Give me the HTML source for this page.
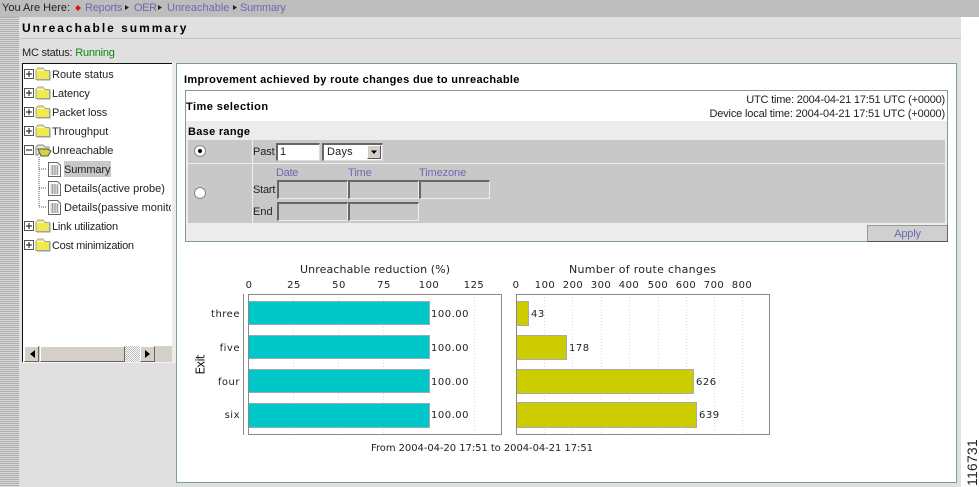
<!DOCTYPE html>
<html><head><meta charset="utf-8"><style>
html,body{margin:0;padding:0;width:979px;height:487px;overflow:hidden;background:#fff}
body{position:relative;font:11px/13px "Liberation Sans",sans-serif;color:#222}
div{position:absolute;box-sizing:border-box}
.t{white-space:nowrap;height:13px;margin-top:1px}
.b{font-weight:bold;color:#000}
.l{color:#6a6ab0}
.in{background:#c8c8c8;border-top:2px solid #666;border-left:2px solid #666;border-right:1px solid #eee;border-bottom:1px solid #eee}
svg{position:absolute;left:0;top:0}
</style></head><body>
<div style="left:0;top:0;width:961px;height:487px;background:#e0e0e0"></div>
<div style="left:0;top:0;width:979px;height:17px;background:#bdbdbd"></div>
<div style="left:0;top:17px;width:19px;height:470px;background:repeating-linear-gradient(180deg,#aeaeae 0,#aeaeae 1px,#d8d8d8 1px,#d8d8d8 2px)"></div>
<div style="left:19px;top:38px;width:942px;height:1px;background:#c4c4c4"></div>
<div style="left:22px;top:63px;width:150px;height:299px;background:#fff;border-left:1px solid #111;border-top:1px solid #111;overflow:hidden"></div>
<div style="left:23px;top:362px;width:149px;height:1px;background:#f4f4f4"></div>
<div style="left:172px;top:63px;width:4px;height:300px;background:#ececec"></div>
<div style="left:176px;top:63px;width:781px;height:420px;background:#fff;border:1px solid #7f9c9c"></div>
<div style="left:185px;top:90px;width:763px;height:152px;background:#fff;border:1px solid #7f9c9c"></div>
<div style="left:186px;top:121px;width:761px;height:120px;background:#ececec"></div>
<div style="left:188px;top:140px;width:757px;height:23px;background:#c8c8c8"></div>
<div style="left:188px;top:164px;width:757px;height:59px;background:#c8c8c8"></div>
<div style="left:252px;top:140px;width:1px;height:83px;background:#eee"></div>

<div class="t" style="left:2px;top:1px">You Are Here:</div>
<div class="t l" style="left:85px;top:1px;letter-spacing:-.2px">Reports</div>
<div class="t l" style="left:134px;top:1px;letter-spacing:-.4px">OER</div>
<div class="t l" style="left:167px;top:1px">Unreachable</div>
<div class="t l" style="left:240px;top:1px;letter-spacing:-.2px">Summary</div>
<div class="t b" style="left:22px;top:21px;font-size:12px;letter-spacing:1.98px">Unreachable summary</div>
<div class="t" style="left:22px;top:46px;letter-spacing:-.22px">MC status: <span style="color:#0a8a0a">Running</span></div>

<div class="t" style="left:52px;top:68px">Route status</div>
<div class="t" style="left:52px;top:87px;letter-spacing:-.1px">Latency</div>
<div class="t" style="left:52px;top:106px;letter-spacing:-.1px">Packet loss</div>
<div class="t" style="left:52px;top:125px">Throughput</div>
<div class="t" style="left:52px;top:144px;letter-spacing:-.1px">Unreachable</div>
<div style="left:64px;top:161px;width:47px;height:16px;background:#c8c8c8"></div>
<div class="t" style="left:64px;top:163px;letter-spacing:-.1px">Summary</div>
<div class="t" style="left:64px;top:182px">Details(active probe)</div>
<div class="t" style="left:64px;top:201px;width:107px;overflow:hidden">Details(passive monitor)</div>
<div class="t" style="left:52px;top:220px;letter-spacing:-.2px">Link utilization</div>
<div class="t" style="left:52px;top:239px;letter-spacing:-.3px">Cost minimization</div>

<div class="t b" style="left:184px;top:73px;letter-spacing:.33px">Improvement achieved by route changes due to unreachable</div>
<div class="t b" style="left:186px;top:100px;letter-spacing:.45px">Time selection</div>
<div class="t b" style="left:188px;top:125px;letter-spacing:.3px">Base range</div>
<div class="t" style="right:34px;top:93px;letter-spacing:-.2px">UTC time: 2004-04-21 17:51 UTC (+0000)</div>
<div class="t" style="right:34px;top:107px;letter-spacing:-.16px">Device local time: 2004-04-21 17:51 UTC (+0000)</div>

<div class="t" style="left:253px;top:145px;letter-spacing:-.1px">Past</div>
<div style="left:276px;top:143px;width:44px;height:18px;background:#fff;border-top:2px solid #666;border-left:2px solid #666;border-right:1px solid #ddd;border-bottom:1px solid #ddd;padding-left:2px;line-height:15px">1</div>
<div style="left:322px;top:143px;width:61px;height:18px;background:#fff;border-top:2px solid #666;border-left:2px solid #666;border-right:1px solid #ddd;border-bottom:1px solid #ddd;padding-left:3px;line-height:15px;letter-spacing:.2px">Days</div>
<div style="left:367px;top:145px;width:14px;height:14px;background:#d4d0c8;border:1px solid;border-color:#fff #555 #555 #fff"></div>
<div class="t l" style="left:276px;top:166px;letter-spacing:-.3px">Date</div>
<div class="t l" style="left:348px;top:166px;letter-spacing:-.1px">Time</div>
<div class="t l" style="left:419px;top:166px;letter-spacing:-.1px">Timezone</div>
<div class="t" style="left:253px;top:183px;letter-spacing:-.2px">Start</div>
<div class="t" style="left:253px;top:205px">End</div>
<div class="in" style="left:277px;top:180px;width:71px;height:19px"></div>
<div class="in" style="left:348px;top:180px;width:71px;height:19px"></div>
<div class="in" style="left:419px;top:180px;width:71px;height:19px"></div>
<div class="in" style="left:277px;top:202px;width:71px;height:19px"></div>
<div class="in" style="left:348px;top:202px;width:71px;height:19px"></div>
<div class="l" style="left:867px;top:225px;width:81px;height:17px;background:#d0d0d0;border:1px solid;border-color:#999 #666 #555 #999;text-align:center;line-height:16px;letter-spacing:-.2px">Apply</div>

<div style="left:24px;top:346px;width:148px;height:16px;background:#d4d0c8"></div>
<div style="left:125px;top:346px;width:15px;height:16px;background:repeating-conic-gradient(#bbb 0 25%,#fff 0 50%) 0 0/2px 2px"></div>
<div style="left:24px;top:346px;width:15px;height:16px;background:#d4d0c8;border:1px solid;border-color:#fff #666 #666 #fff"></div>
<div style="left:40px;top:346px;width:85px;height:16px;background:#d4d0c8;border:1px solid;border-color:#fff #666 #666 #fff"></div>
<div style="left:140px;top:346px;width:15px;height:16px;background:#d4d0c8;border:1px solid;border-color:#fff #666 #666 #fff"></div>

<div class="t" style="left:965px;top:486px;margin:0;font-size:14px;line-height:14px;height:14px;transform-origin:0 0;transform:rotate(-90deg);letter-spacing:.2px;color:#222">116731</div>

<svg width="979" height="487" viewBox="0 0 979 487" xmlns="http://www.w3.org/2000/svg">
<defs>
<g id="plus"><rect x="0.5" y="0.5" width="9" height="9" fill="#fff" stroke="#555"/><path d="M2 5h6M5 2v6" stroke="#111" shape-rendering="crispEdges"/></g>
<g id="folder"><path d="M1 3.500 3 1h5l2 2.500h4.500v9H1z" fill="#eeea50" stroke="#a8a890"/><path d="M2 3.500h7" stroke="#fff"/><path d="M15 4v9H2" fill="none" stroke="#999"/></g>
<g id="doc"><path d="M.5.500h9l3 3v11H.5z" fill="#fff" stroke="#666"/><path d="M2.500 4h8M2.500 6h8M2.500 8h8M2.500 10h8M2.500 12h8M4.500 3v10M7 3v10M9.500 4v9" stroke="#8a8a8a" stroke-width=".7" fill="none"/></g>
</defs>
<path d="M78 5l3 3-3 3-3-3z" fill="#d81818"/>
<path d="M125 5l4 2.500-4 2.500zM158 5l4 2.500-4 2.500zM233 5l4 2.500-4 2.500z" fill="#222"/>

<use href="#plus" x="24" y="69"/><use href="#folder" x="35" y="67"/>
<use href="#plus" x="24" y="88"/><use href="#folder" x="35" y="86"/>
<use href="#plus" x="24" y="107"/><use href="#folder" x="35" y="105"/>
<use href="#plus" x="24" y="126"/><use href="#folder" x="35" y="124"/>
<rect x="24.500" y="145.500" width="9" height="9" fill="#fff" stroke="#555"/><path d="M26 150h6" stroke="#111" shape-rendering="crispEdges"/>
<path d="M36 147l2-2h5l2 2h4v4H40l-2 4h-2z" fill="#e8e8d8" stroke="#888"/>
<path d="M38 149h9l4 2-3 5H41z" fill="#d8d43a" stroke="#555"/>
<path d="M39 157v50M39 169h8M39 188h8M39 207h8" stroke="#555" stroke-dasharray="1 1" fill="none"/>
<use href="#doc" x="48" y="162"/><use href="#doc" x="48" y="181"/><use href="#doc" x="48" y="200"/>
<use href="#plus" x="24" y="221"/><use href="#folder" x="35" y="219"/>
<use href="#plus" x="24" y="240"/><use href="#folder" x="35" y="238"/>

<circle cx="200" cy="151" r="5.500" fill="#fff" stroke="#888"/><circle cx="200" cy="151" r="2" fill="#000"/>
<circle cx="200" cy="193" r="5.500" fill="#fff" stroke="#888"/>
<path d="M371 150.500h6l-3 3.500z" fill="#000"/>
<path d="M35 350v8l-5-4zM145 350v8l5-4z" fill="#000"/>

<!-- chart 1 -->
<g stroke="#ddd" stroke-dasharray="1 2"><path d="M293.500 294v140M338.500 294v140M383.500 294v140M474.500 294v140"/></g>
<g fill="#00c8c8" stroke="#9ab"><rect x="248.500" y="301.500" width="181" height="23"/><rect x="248.500" y="335.500" width="181" height="23"/><rect x="248.500" y="369.500" width="181" height="23"/><rect x="248.500" y="403.500" width="181" height="24"/></g>
<rect x="248.500" y="294.500" width="253" height="140" fill="none" stroke="#888"/>
<path d="M243.500 294v141" stroke="#888"/>
<!-- chart 2 -->
<g stroke="#ddd" stroke-dasharray="1 2"><path d="M544.500 294v140M572.500 294v140M601.500 294v140M629.500 294v140M658.500 294v140M686.500 294v140M714.500 294v140M742.500 294v140"/></g>
<g fill="#cccc00" stroke="#aaa"><rect x="516.500" y="301.500" width="12" height="24"/><rect x="516.500" y="335.500" width="50" height="24"/><rect x="516.500" y="369.500" width="177" height="24"/><rect x="516.500" y="402.500" width="180" height="25"/></g>
<rect x="516.500" y="294.500" width="253" height="140" fill="none" stroke="#888"/>

<g font-family="'DejaVu Sans',sans-serif" fill="#222" font-size="11">
<text x="300" y="273" textLength="150" lengthAdjust="spacing">Unreachable reduction (%)</text>
<text x="569" y="273" textLength="147" lengthAdjust="spacing">Number of route changes</text>
<text transform="translate(204.500 374.500) rotate(-90)" font-size="12" textLength="20">Exit</text>
</g>
<g font-family="'DejaVu Sans',sans-serif" fill="#222" font-size="10">
<g text-anchor="middle" letter-spacing=".5">
<text x="249" y="288">0</text><text x="294" y="288">25</text><text x="339" y="288">50</text><text x="384" y="288">75</text><text x="429" y="288">100</text><text x="474" y="288">125</text>
<text x="516" y="288">0</text><text x="545" y="288">100</text><text x="573" y="288">200</text><text x="601" y="288">300</text><text x="629" y="288">400</text><text x="658" y="288">500</text><text x="686" y="288">600</text><text x="714" y="288">700</text><text x="742" y="288">800</text>
</g>
<g text-anchor="end" letter-spacing=".5">
<text x="240" y="317">three</text><text x="240" y="351">five</text><text x="240" y="385">four</text><text x="240" y="418">six</text>
</g>
<g letter-spacing=".5">
<text x="431" y="317">100.00</text><text x="431" y="351">100.00</text><text x="431" y="385">100.00</text><text x="431" y="418">100.00</text>
<text x="531" y="317">43</text><text x="569" y="351">178</text><text x="696" y="385">626</text><text x="699" y="418">639</text>
</g>
<text x="371" y="451" textLength="222" lengthAdjust="spacing">From 2004-04-20 17:51 to 2004-04-21 17:51</text>
</g>
</svg>
</body></html>
